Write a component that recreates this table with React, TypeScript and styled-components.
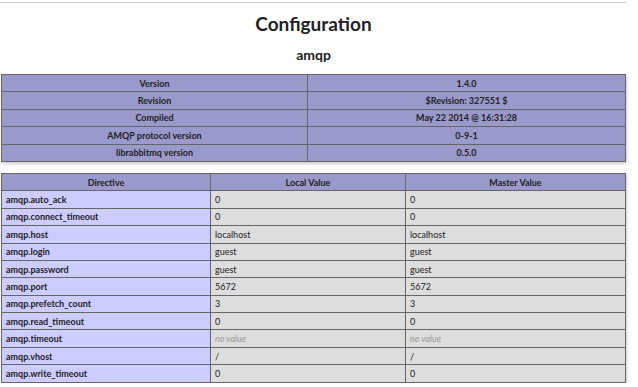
import styled, { createGlobalStyle } from 'styled-components';

const GlobalStyle = createGlobalStyle`
  html, body {
    margin: 0;
    padding: 0;
    background: #fff;
    color: #222;
    font-family: Lato, "Open Sans", "DejaVu Sans", sans-serif;
  }
`;

const Page = styled.div`
  width: 625px;
  padding: 2px 0 0 1px;
`;

const Rule = styled.hr`
  width: 626px;
  margin: 0 0 0 -1px;
  height: 1px;
  border: 0;
  background-color: #ccc;
`;

const Title = styled.h1`
  margin: 10px 0 0;
  text-align: center;
  font-size: 19px;
  line-height: 22px;
  font-weight: bold;
`;

const Subtitle = styled.h2`
  margin: 11px 0 0;
  text-align: center;
  font-size: 14px;
  line-height: 18px;
  font-weight: bold;
`;

const Table = styled.table<{ $top: number }>`
  border-collapse: collapse;
  width: 625px;
  margin-top: ${p => p.$top}px;
  box-shadow: 1px 2px 3px #ccc;
  table-layout: fixed;
`;

const Row = styled.tr`
  height: 17.4px;
`;

const Cell = styled.td<{ $kind: 'h' | 'e' | 'v'; $center?: boolean }>`
  border: 1px solid #666;
  font-size: 9px;
  line-height: 11px;
  padding: 0 4px;
  white-space: nowrap;
  overflow: hidden;
  text-align: ${p => (p.$center ? 'center' : 'left')};
  font-weight: ${p => (p.$kind === 'v' ? 'normal' : 'bold')};
  background-color: ${p => (p.$kind === 'h' ? '#99c' : p.$kind === 'e' ? '#ccf' : '#ddd')};
`;

const HeadCell = styled.th`
  border: 1px solid #666;
  font-size: 9px;
  line-height: 11px;
  padding: 0 4px;
  text-align: center;
  font-weight: bold;
  background-color: #99c;
`;

const NoValue = styled.i`
  color: #999;
`;

const info: [string, string][] = [
  ['Version', '1.4.0'],
  ['Revision', '$Revision: 327551 $'],
  ['Compiled', 'May 22 2014 @ 16:31:28'],
  ['AMQP protocol version', '0-9-1'],
  ['librabbitmq version', '0.5.0'],
];

const directives: [string, string | null][] = [
  ['amqp.auto_ack', '0'],
  ['amqp.connect_timeout', '0'],
  ['amqp.host', 'localhost'],
  ['amqp.login', 'guest'],
  ['amqp.password', 'guest'],
  ['amqp.port', '5672'],
  ['amqp.prefetch_count', '3'],
  ['amqp.read_timeout', '0'],
  ['amqp.timeout', null],
  ['amqp.vhost', '/'],
  ['amqp.write_timeout', '0'],
];

export default function App() {
  return (
    <>
      <GlobalStyle />
      <Page>
        <Rule />
        <Title>Configuration</Title>
        <Subtitle>amqp</Subtitle>
        <Table $top={10}>
          <colgroup>
            <col style={{ width: 306 }} />
            <col />
          </colgroup>
          <tbody>
            {info.map(([k, v]) => (
              <Row key={k}>
                <Cell $kind="h" $center>{k}</Cell>
                <Cell $kind="h" $center>{v}</Cell>
              </Row>
            ))}
          </tbody>
        </Table>
        <Table $top={11}>
          <colgroup>
            <col style={{ width: 209 }} />
            <col style={{ width: 195 }} />
            <col />
          </colgroup>
          <tbody>
            <Row>
              <HeadCell>Directive</HeadCell>
              <HeadCell>Local Value</HeadCell>
              <HeadCell>Master Value</HeadCell>
            </Row>
            {directives.map(([k, v]) => (
              <Row key={k}>
                <Cell $kind="e">{k}</Cell>
                <Cell $kind="v">{v ?? <NoValue>no value</NoValue>}</Cell>
                <Cell $kind="v">{v ?? <NoValue>no value</NoValue>}</Cell>
              </Row>
            ))}
          </tbody>
        </Table>
      </Page>
    </>
  );
}
